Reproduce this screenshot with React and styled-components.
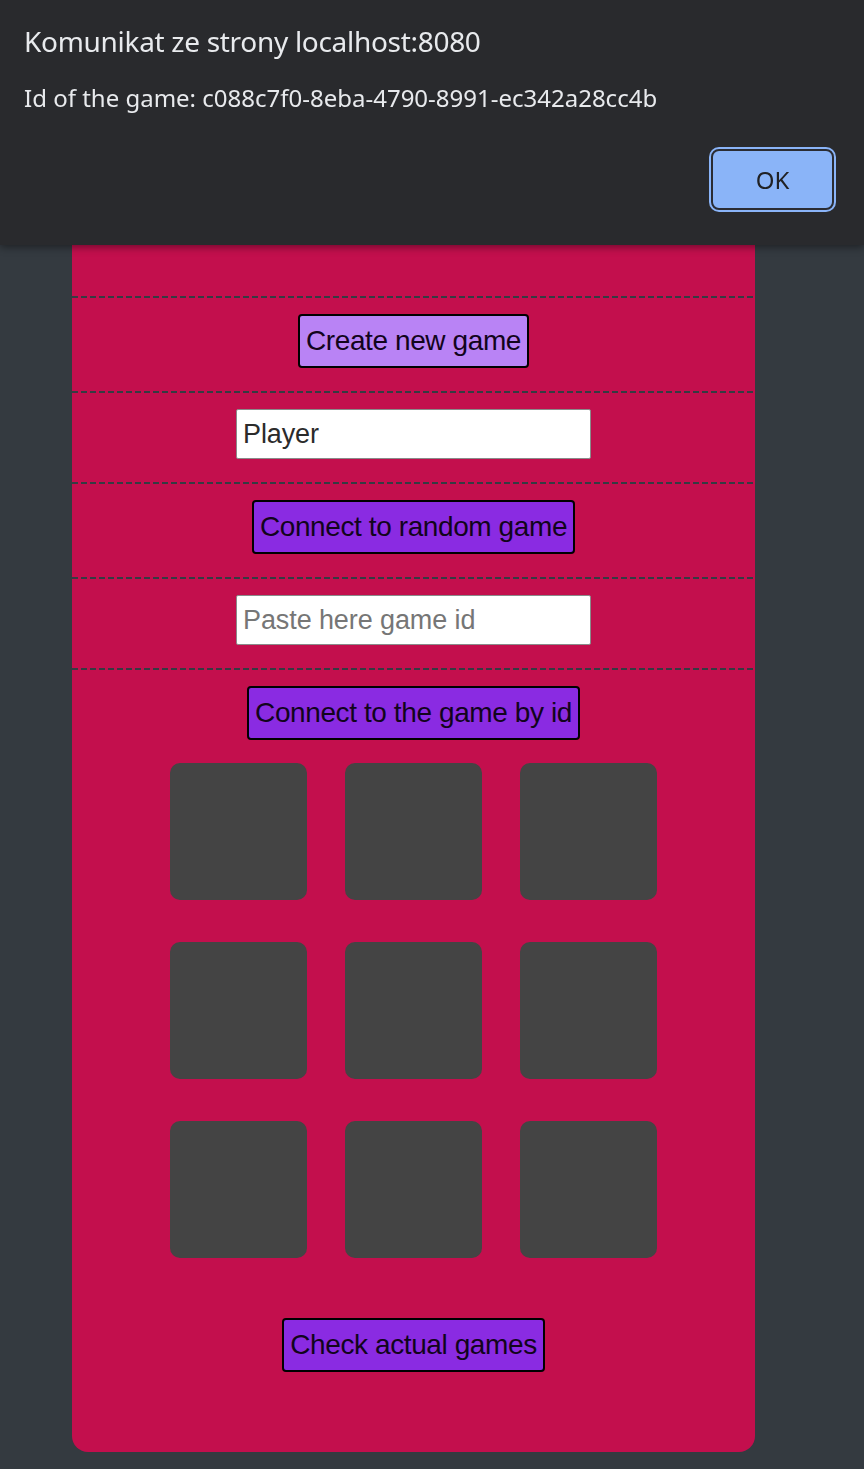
import React from 'react';
import styled, { createGlobalStyle } from 'styled-components';

const GlobalStyle = createGlobalStyle`
  body {
    margin: 0;
    background: #343a40;
    font-family: "Liberation Sans", Arial, sans-serif;
  }
`;

const Page = styled.div`
  min-height: 1469px;
  padding-top: 200px;
  box-sizing: border-box;
`;

const Board = styled.main`
  width: 683px;
  margin-left: 72px;
  padding-bottom: 80px;
  background: #c30f4d;
  border-radius: 0 0 16px 16px;
  display: flex;
  flex-direction: column;
`;

const Spacer = styled.div`
  height: 96px;
`;

const Section = styled.section`
  display: flex;
  justify-content: center;
  padding: ${props => (props.divided ? '18px' : '16px')} 0 23px;
  background: ${props => props.divided
    ? 'repeating-linear-gradient(90deg, #353b42 0 6px, transparent 6px 9px) top / 100% 2px no-repeat'
    : 'none'};
`;

const Button = styled.button`
  font-family: "Liberation Sans", Arial, sans-serif;
  font-size: 28px;
  letter-spacing: -0.4px;
  color: #12041c;
  background: ${props => (props.light ? '#b983f5' : '#8a2be2')};
  border: 2px solid #000;
  border-radius: 4px;
  padding: 10px 6px 11px;
  line-height: 29px;
  cursor: pointer;
`;

const Input = styled.input`
  width: 355px;
  height: 50px;
  box-sizing: border-box;
  border: 1px solid #8a8a8a;
  border-radius: 2px;
  padding: 0 6px;
  font-family: "Liberation Sans", Arial, sans-serif;
  font-size: 27px;
  letter-spacing: -0.1px;
  color: #2b2b2b;
  background: #fff;
  outline: none;

  &::placeholder {
    color: #767676;
  }
`;

const Grid = styled.div`
  display: grid;
  grid-template-columns: repeat(3, 137px);
  grid-auto-rows: 137px;
  column-gap: 38px;
  row-gap: 42px;
  justify-content: center;
  margin-bottom: 60px;
`;

const Cell = styled.div`
  background: #444;
  border-radius: 10px;
`;

const Footer = styled.div`
  display: flex;
  justify-content: center;
`;

// browser alert box drawn over the page
const Alert = styled.div`
  position: fixed;
  top: 0;
  left: 0;
  right: 0;
  height: 245px;
  background: #292a2d;
  box-shadow: 0 2px 8px rgba(0, 0, 0, 0.45);
  padding: 22px 24px 0;
  box-sizing: border-box;
  font-family: "Noto Sans", "Open Sans", sans-serif;
  color: #e8eaed;
`;

const AlertTitle = styled.div`
  font-size: 28px;
  line-height: 38px;
  letter-spacing: -0.3px;
`;

const AlertText = styled.div`
  margin-top: 22px;
  font-size: 24px;
  line-height: 32px;
`;

const AlertActions = styled.div`
  display: flex;
  justify-content: flex-end;
  margin-top: 35px;
  padding-right: 6px;
`;

const OkButton = styled.button`
  width: 123px;
  height: 61px;
  background: #8ab4f8;
  border: 2px solid #2a2c33;
  border-radius: 8px;
  box-shadow: 0 0 0 2px #8ab4f8;
  font-family: "Noto Sans", "Open Sans", sans-serif;
  font-size: 24px;
  color: #202124;
`;

export default function App() {
  const cells = Array.from({ length: 9 }, (_, i) => i);

  return (
    <>
      <GlobalStyle />
      <Page>
        <Board>
          <Spacer />
          <Section divided>
            <Button light>Create new game</Button>
          </Section>
          <Section divided>
            <Input defaultValue="Player" />
          </Section>
          <Section divided>
            <Button>Connect to random game</Button>
          </Section>
          <Section divided>
            <Input placeholder="Paste here game id" />
          </Section>
          <Section divided>
            <Button>Connect to the game by id</Button>
          </Section>
          <Grid>
            {cells.map(i => <Cell key={i} />)}
          </Grid>
          <Footer>
            <Button>Check actual games</Button>
          </Footer>
        </Board>
      </Page>
      <Alert>
        <AlertTitle>Komunikat ze strony localhost:8080</AlertTitle>
        <AlertText>Id of the game: c088c7f0-8eba-4790-8991-ec342a28cc4b</AlertText>
        <AlertActions>
          <OkButton>OK</OkButton>
        </AlertActions>
      </Alert>
    </>
  );
}
